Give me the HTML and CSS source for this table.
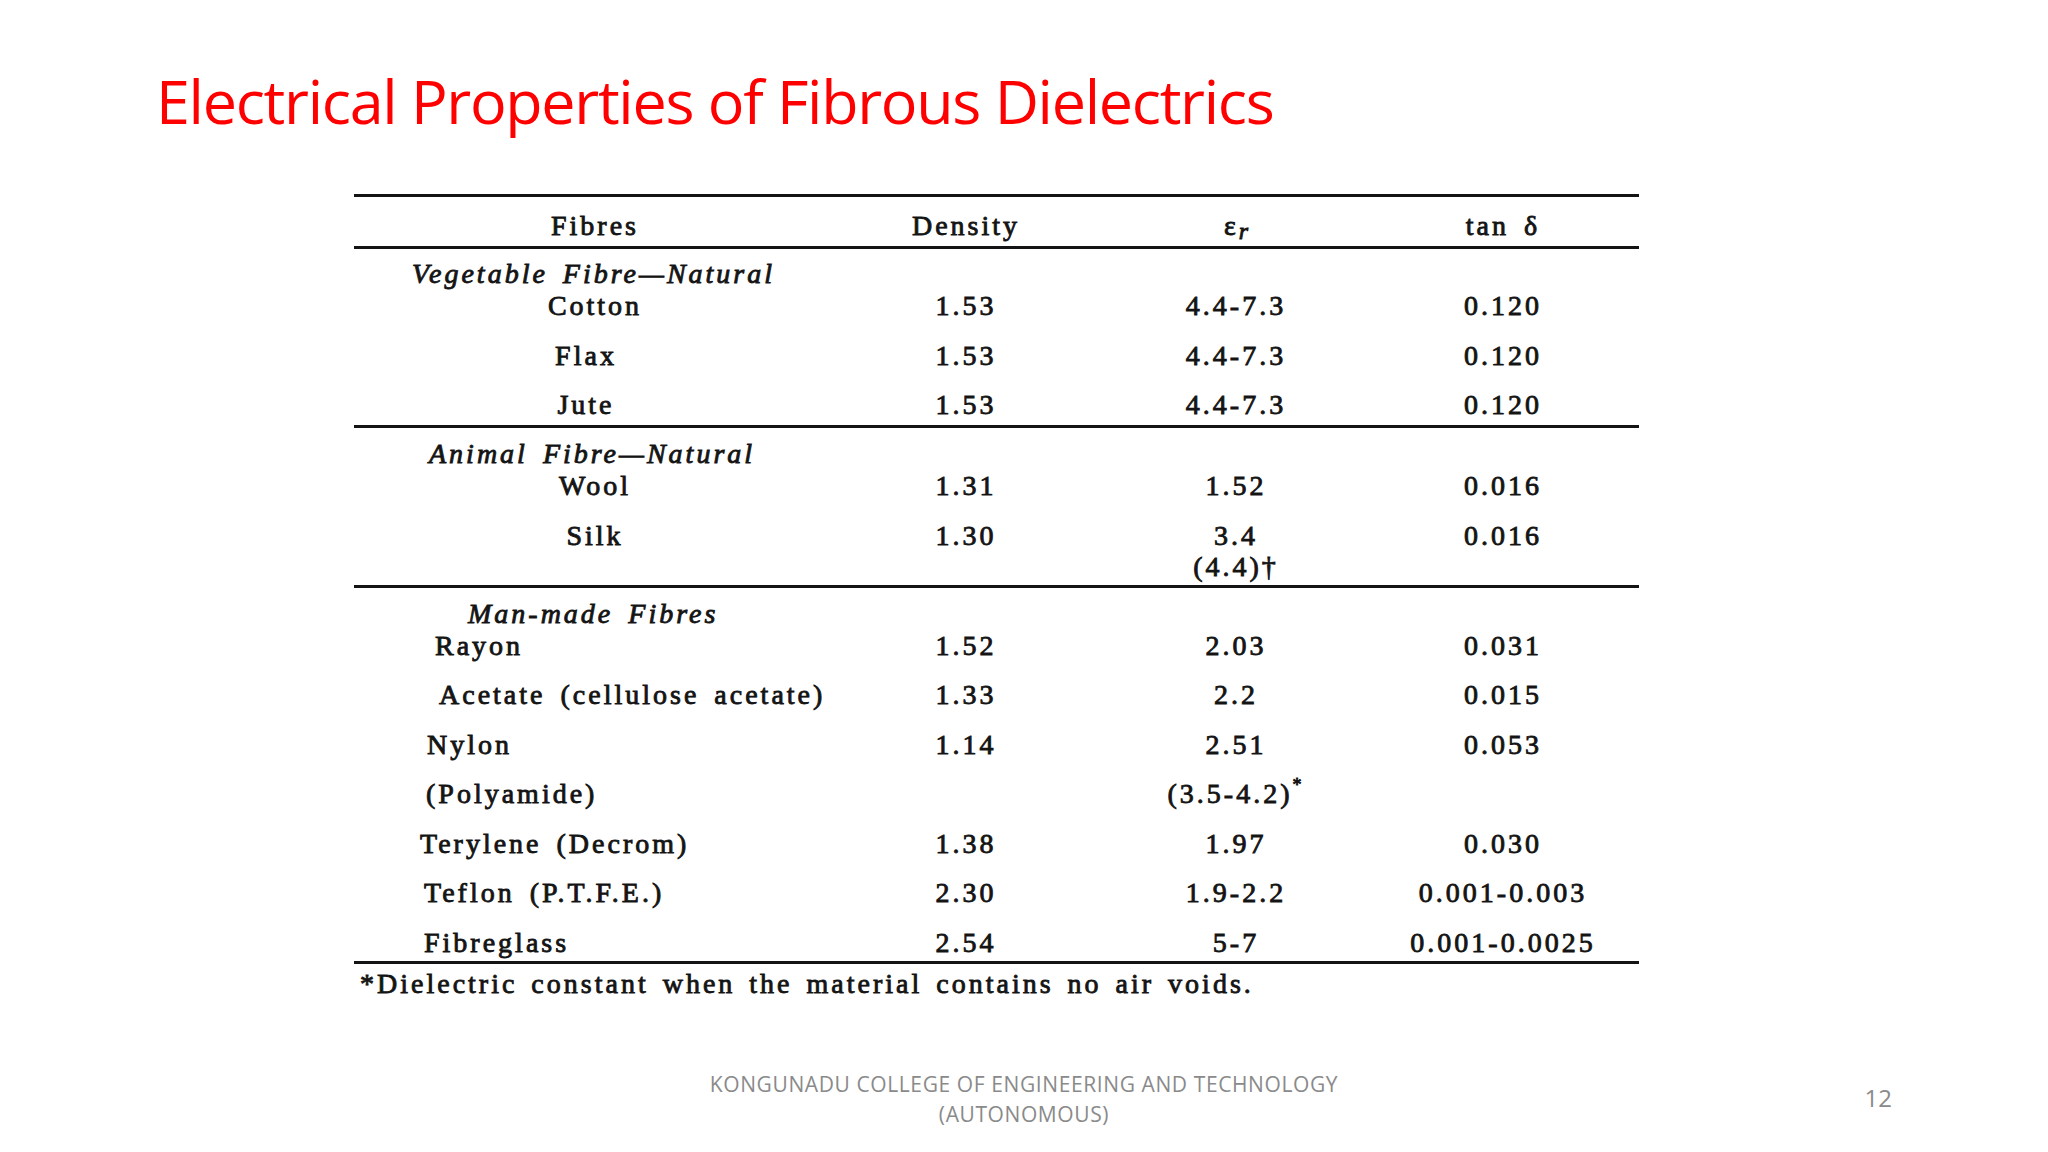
FILE: index.html
```html
<!DOCTYPE html>
<html lang="en">
<head>
<meta charset="utf-8">
<title>Electrical Properties of Fibrous Dielectrics</title>
<link rel="stylesheet" href="styles.css">
</head>
<body>
<div class="slide">
  <h1 class="title">Electrical Properties of Fibrous Dielectrics</h1>

  <div class="table">
    <div class="row thead">
      <span class="c">Fibres</span>
      <span>Density</span>
      <span>ε<i class="sub">r</i></span>
      <span>tan δ</span>
    </div>

    <div class="section s1">
      <div class="group veg">Vegetable Fibre—Natural</div>
      <div class="row first"><span class="c">Cotton</span><span>1.53</span><span>4.4-7.3</span><span>0.120</span></div>
      <div class="row"><span class="c nudge-l">Flax</span><span>1.53</span><span>4.4-7.3</span><span>0.120</span></div>
      <div class="row"><span class="c nudge-l">Jute</span><span>1.53</span><span>4.4-7.3</span><span>0.120</span></div>
    </div>

    <div class="section s2">
      <div class="group ani">Animal Fibre—Natural</div>
      <div class="row first"><span class="c">Wool</span><span>1.31</span><span>1.52</span><span>0.016</span></div>
      <div class="row"><span class="c">Silk</span><span>1.30</span><span>3.4<br>(4.4)†</span><span>0.016</span></div>
    </div>

    <div class="section s3">
      <div class="group man">Man-made Fibres</div>
      <div class="row first"><span class="l p81">Rayon</span><span>1.52</span><span>2.03</span><span>0.031</span></div>
      <div class="row"><span class="l p85">Acetate (cellulose acetate)</span><span>1.33</span><span>2.2</span><span>0.015</span></div>
      <div class="row"><span class="l p73">Nylon</span><span>1.14</span><span>2.51</span><span>0.053</span></div>
      <div class="row"><span class="l p72">(Polyamide)</span><span></span><span>(3.5-4.2)<sup class="ast">*</sup></span><span></span></div>
      <div class="row"><span class="l p66">Terylene (Decrom)</span><span>1.38</span><span>1.97</span><span>0.030</span></div>
      <div class="row"><span class="l p70">Teflon (P.T.F.E.)</span><span>2.30</span><span>1.9-2.2</span><span>0.001-0.003</span></div>
      <div class="row"><span class="l p70">Fibreglass</span><span>2.54</span><span>5-7</span><span>0.001-0.0025</span></div>
    </div>

    <p class="note">*Dielectric constant when the material contains no air voids.</p>
  </div>

  <footer class="footer">
    <div class="spacer"></div>
    <div class="college">KONGUNADU COLLEGE OF ENGINEERING AND TECHNOLOGY<br>(AUTONOMOUS)</div>
    <div class="pageno">12</div>
  </footer>
</div>
</body>
</html>
```

FILE: styles.css
```css
html, body {
  margin: 0;
  padding: 0;
  background: #ffffff;
}

.slide {
  width: 2048px;
  height: 1152px;
  overflow: hidden;
  background: #ffffff;
}

.title {
  margin: 61px 0 0 0;
  padding-left: 156px;
  height: 80px;
  font-family: "Open Sans", "Liberation Sans", sans-serif;
  font-weight: 400;
  font-size: 61px;
  letter-spacing: -1.3px;
  line-height: 80px;
  color: #ff0000;
  white-space: nowrap;
}

.table {
  margin: 53px 0 0 354px;
  width: 1285px;
  font-family: "Liberation Serif", "Times New Roman", serif;
  font-size: 28px;
  letter-spacing: 3px;
  word-spacing: 5px;
  color: #141414;
  -webkit-text-stroke: 0.85px #141414;
}

.row {
  display: grid;
  grid-template-columns: 482px 260px 280px 254px 9px;
  line-height: 31px;
  margin-top: 18.5px;
}

.row > span {
  text-align: center;
  white-space: nowrap;
}

.row > span.l {
  text-align: left;
}

.row.first {
  margin-top: 1px;
}

.thead {
  margin-top: 0;
  height: 31px;
  border-top: 3px solid #141414;
  border-bottom: 3px solid #141414;
  padding: 13px 0 5px 0;
}

.nudge-l {
  padding-right: 18px;
}

.sub {
  font-size: 24px;
  line-height: 0;
  vertical-align: -4px;
  letter-spacing: 0;
}

.ast {
  font-size: 18px;
  vertical-align: 12px;
  line-height: 0;
}

.section {
  border-bottom: 3px solid #141414;
  padding: 10px 0 3px 0;
}

.section.s1 {
  padding: 9px 0 5px 0;
}

.group {
  font-style: italic;
  line-height: 31px;
  white-space: nowrap;
}

.veg { padding-left: 58px; }
.ani { padding-left: 75px; }
.man { padding-left: 114px; }

.p66 { padding-left: 66px; }
.p70 { padding-left: 70px; }
.p72 { padding-left: 72px; }
.p73 { padding-left: 73px; }
.p81 { padding-left: 81px; }
.p85 { padding-left: 85px; }

.note {
  margin: 4px 0 0 6px;
  line-height: 31px;
  word-spacing: 4px;
  white-space: nowrap;
}

.footer {
  margin-top: 70px;
  display: grid;
  grid-template-columns: 1fr auto 1fr;
  font-family: "Open Sans", "Liberation Sans", sans-serif;
  color: #8a8a8a;
}

.college {
  font-size: 21px;
  line-height: 30px;
  letter-spacing: 0.6px;
  text-align: center;
}

.pageno {
  justify-self: end;
  padding-right: 156px;
  margin-top: 14px;
  font-size: 24px;
  line-height: 30px;
}
```
